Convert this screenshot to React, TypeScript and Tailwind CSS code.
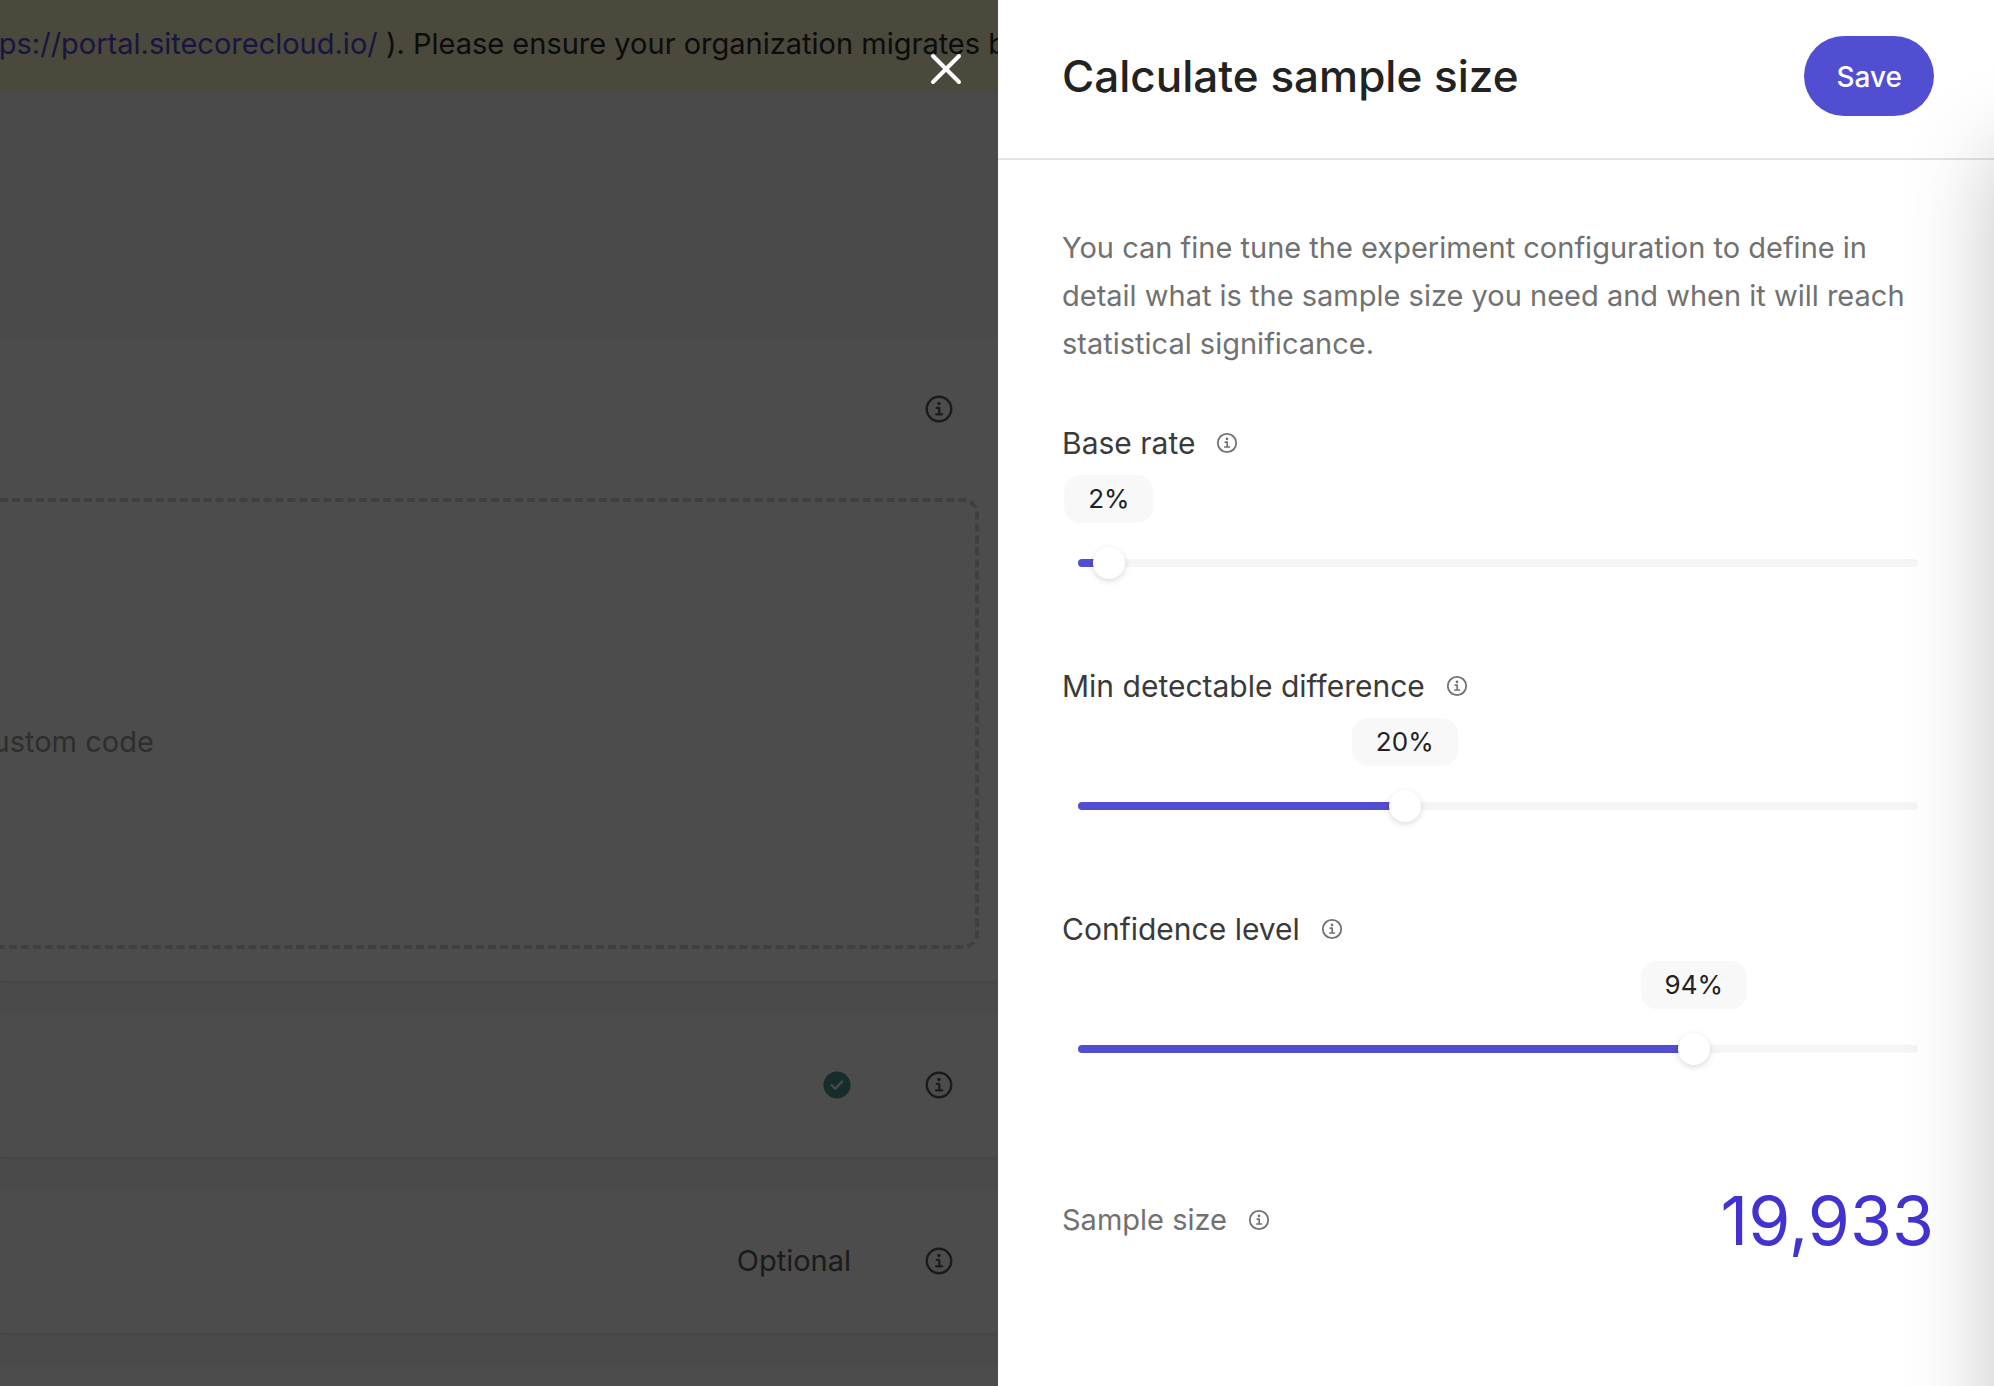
import { useState, type CSSProperties } from "react";

type SliderProps = {
    id: string;
    label: string;
    min: number;
    max: number;
    step: number;
    initial: number;
}

const InfoIcon = ({ className }: { className: string }) => (
    <svg viewBox="0 0 24 24" className={className} fill="none" stroke="currentColor" aria-hidden="true">
        <circle cx="12" cy="12" r="9.2" strokeWidth="1.8" />
        <circle cx="12" cy="7.9" r="1.3" fill="currentColor" stroke="none" />
        <path d="M10.3 11.2h1.9v4.6M9.8 16h4.6" strokeWidth="1.7" strokeLinecap="round" strokeLinejoin="round" />
    </svg>
)

const CheckIcon = () => (
    <svg viewBox="0 0 24 24" className="size-8" aria-hidden="true">
        <circle cx="12" cy="12" r="10.2" fill="#4a9a90" />
        <path d="M8 12.2l2.6 2.6 5.3-5.4" fill="none" stroke="#f7f7f7" strokeWidth="1.8" strokeLinecap="round" strokeLinejoin="round" />
    </svg>
)

const InfoButton = ({ label }: { label: string }) => (
    <button type="button" aria-label={label} className="text-[#717171]">
        <InfoIcon className="size-6" />
    </button>
)

const PercentSlider = ({ id, label, min, max, step, initial }: SliderProps) => {
    const [value, setValue] = useState(initial);
    const ratio = (value - min) / (max - min);

    // Centre of the thumb, which is 32px wide and stays inside the track
    const stop = `calc(16px + ${ratio} * (100% - 32px))`;

    return (
        <div>
            <div className="flex items-center gap-5 text-[#3a3a3a]">
                <label htmlFor={id} className="text-[30px]">{label}</label>
                <InfoButton label={`About ${label}`} />
            </div>
            <div className="mt-2 px-4">
                <div className="relative h-12">
                    <output
                        htmlFor={id}
                        className="absolute top-0 h-12 -translate-x-1/2 rounded-2xl bg-[#f8f8f8] px-6 text-[26px] text-[#222222]"
                        style={{ left: stop }}
                    >
                        {value}%
                    </output>
                </div>
                <input
                    id={id}
                    type="range"
                    min={min}
                    max={max}
                    step={step}
                    value={value}
                    onChange={e => setValue(+e.target.value)}
                    className="mt-6 block h-8 w-full cursor-pointer appearance-none bg-transparent [&::-webkit-slider-runnable-track]:h-2 [&::-webkit-slider-runnable-track]:rounded-full [&::-webkit-slider-runnable-track]:bg-[linear-gradient(to_right,#514ed1_var(--stop),#f5f5f5_var(--stop))] [&::-webkit-slider-thumb]:-mt-3 [&::-webkit-slider-thumb]:size-8 [&::-webkit-slider-thumb]:appearance-none [&::-webkit-slider-thumb]:rounded-full [&::-webkit-slider-thumb]:bg-white [&::-webkit-slider-thumb]:shadow-[0_2px_6px_rgba(0,0,0,0.15)]"
                    style={{ "--stop": stop } as CSSProperties}
                />
            </div>
        </div>
    )
}

// Experiment page that stays visible behind the drawer
const ExperimentPage = () => (
    <div className="flex h-full flex-col overflow-hidden bg-[#f7f7f7]">
        <div className="flex h-[92px] shrink-0 justify-end bg-[#faf0c8] pt-5 whitespace-nowrap text-[#2a2a2a]">
            <p className="-mr-2">
                <a href="https://portal.sitecorecloud.io/" className="text-[#5548d9]">https://portal.sitecorecloud.io/</a>
                {" "}). Please ensure your organization migrates b
            </p>
        </div>

        <div className="mt-[246px] flex shrink-0 flex-col bg-white pb-8 shadow-[0_2px_3px_rgba(0,0,0,0.06)]">
            <div className="flex h-40 items-start justify-end pt-[55px] pr-[43px] text-[#5a5a5a]">
                <InfoIcon className="size-8" />
            </div>
            <div className="mr-[19px] -ml-7 flex h-[451px] items-center rounded-2xl border-4 border-dashed border-[#d3d3d3] pt-9">
                <p className="text-[#999999]">custom code</p>
            </div>
        </div>

        <div className="mt-8 flex h-36 shrink-0 items-center justify-end gap-[70px] bg-white pr-[43px] text-[#5a5a5a] shadow-[0_2px_3px_rgba(0,0,0,0.06)]">
            <CheckIcon />
            <InfoIcon className="size-8" />
        </div>

        <div className="mt-8 flex h-36 shrink-0 items-center justify-end gap-[72px] bg-white pr-[43px] text-[#5a5a5a] shadow-[0_2px_3px_rgba(0,0,0,0.06)]">
            <span>Optional</span>
            <InfoIcon className="size-8" />
        </div>

        <div className="mt-8 flex-1 bg-white" />
    </div>
)

export default function App() {
    return (
        <div className="grid h-screen grid-cols-[998fr_996fr] overflow-hidden font-['Inter',sans-serif] text-[29px] leading-12">
            <div className="relative min-w-0 overflow-hidden">
                <ExperimentPage />

                {/* Backdrop */}
                <div className="absolute inset-0 bg-black/70" />
                <button type="button" aria-label="Close" className="absolute top-[49px] right-8 text-white">
                    <svg viewBox="0 0 40 40" className="size-10" fill="none" stroke="currentColor" strokeWidth="4" strokeLinecap="round">
                        <path d="M7 7l26 26M33 7L7 33" />
                    </svg>
                </button>
            </div>

            <div role="dialog" aria-labelledby="drawer-title" className="relative overflow-hidden bg-white">
                <div className="flex items-center justify-between border-b-2 border-[#e3e3e3] pt-9 pr-[60px] pb-[42px] pl-16">
                    <h1 id="drawer-title" className="text-[44px] font-medium text-[#222222]">Calculate sample size</h1>
                    <button type="button" className="h-20 rounded-full bg-[#514ed1] px-8 pt-0.5 text-[28px] font-medium text-white">Save</button>
                </div>

                <div className="pt-16 pr-[60px] pl-16">
                    <p className="text-[#717171]">
                        You can fine tune the experiment configuration to define in detail what is the sample size you need and when it will reach statistical significance.
                    </p>

                    <div className="mt-[51px] flex flex-col gap-[83px]">
                        <PercentSlider id="base-rate" label="Base rate" min={1} max={55} step={1} initial={2} />
                        <PercentSlider id="min-difference" label="Min detectable difference" min={0} max={52} step={1} initial={20} />
                        <PercentSlider id="confidence" label="Confidence level" min={77} max={99.9} step={0.1} initial={94} />
                    </div>

                    <div className="mt-[115px] flex items-center justify-between">
                        <div className="flex items-center gap-5 text-[#717171]">
                            <span>Sample size</span>
                            <InfoButton label="About Sample size" />
                        </div>
                        <span className="text-[68px] leading-20 text-[#4233d1]">19,933</span>
                    </div>
                </div>

                {/* Shadow of the collapsed side panel */}
                <div className="pointer-events-none absolute top-[150px] -bottom-40 left-full w-60 shadow-[0_0_90px_rgba(0,0,0,0.23)]" />
            </div>
        </div>
    );
}
